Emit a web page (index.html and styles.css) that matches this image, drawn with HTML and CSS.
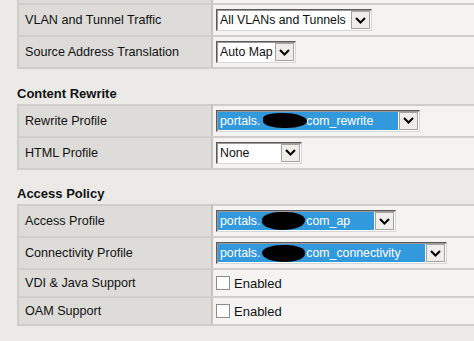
FILE: index.html
```html
<!DOCTYPE html>
<html>
<head>
<meta charset="utf-8">
<link rel="stylesheet" href="styles.css">
</head>
<body>
<div class="page">
  <table class="props first">
    <tr class="row"><td class="label"></td><td class="value"></td></tr>
    <tr class="row"><td class="label">VLAN and Tunnel Traffic</td>
      <td class="value"><div class="sel w-vlan"><span class="txt">All VLANs and Tunnels</span><span class="btn"><svg width="11" height="7" viewBox="0 0 11 7"><path d="M1 1 L5.5 5.5 L10 1" fill="none" stroke="#000" stroke-width="2"/></svg></span></div></td></tr>
    <tr class="row"><td class="label">Source Address Translation</td>
      <td class="value"><div class="sel w-auto"><span class="txt">Auto Map</span><span class="btn"><svg width="11" height="7" viewBox="0 0 11 7"><path d="M1 1 L5.5 5.5 L10 1" fill="none" stroke="#000" stroke-width="2"/></svg></span></div></td></tr>
  </table>

  <h3 class="section">Content Rewrite</h3>
  <table class="props">
    <tr class="row"><td class="label">Rewrite Profile</td>
      <td class="value"><div class="sel w-rewrite"><span class="txt hl">portals.<span class="redact r1"></span><span class="gap1"></span>com_rewrite</span><span class="btn"><svg width="11" height="7" viewBox="0 0 11 7"><path d="M1 1 L5.5 5.5 L10 1" fill="none" stroke="#000" stroke-width="2"/></svg></span></div></td></tr>
    <tr class="row"><td class="label">HTML Profile</td>
      <td class="value"><div class="sel w-none"><span class="txt">None</span><span class="btn"><svg width="11" height="7" viewBox="0 0 11 7"><path d="M1 1 L5.5 5.5 L10 1" fill="none" stroke="#000" stroke-width="2"/></svg></span></div></td></tr>
  </table>

  <h3 class="section">Access Policy</h3>
  <table class="props">
    <tr class="row"><td class="label">Access Profile</td>
      <td class="value"><div class="sel w-access"><span class="txt hl">portals.<span class="redact r2"></span><span class="gap1"></span>com_ap</span><span class="btn"><svg width="11" height="7" viewBox="0 0 11 7"><path d="M1 1 L5.5 5.5 L10 1" fill="none" stroke="#000" stroke-width="2"/></svg></span></div></td></tr>
    <tr class="row"><td class="label">Connectivity Profile</td>
      <td class="value"><div class="sel w-conn"><span class="txt hl">portals.<span class="redact r3"></span><span class="gap1"></span>com_connectivity</span><span class="btn"><svg width="11" height="7" viewBox="0 0 11 7"><path d="M1 1 L5.5 5.5 L10 1" fill="none" stroke="#000" stroke-width="2"/></svg></span></div></td></tr>
    <tr class="row short"><td class="label">VDI &amp; Java Support</td>
      <td class="value"><label class="chk"><span class="box"></span>Enabled</label></td></tr>
    <tr class="row short"><td class="label">OAM Support</td>
      <td class="value"><label class="chk"><span class="box"></span>Enabled</label></td></tr>
  </table>
</div>
</body>
</html>
```

FILE: styles.css
```css
html, body {
  margin: 0;
  padding: 0;
  background: #ebeae7;
  overflow: hidden;
}
body {
  font-family: "Liberation Sans", Arial, sans-serif;
  font-size: 12.6px;
  color: #111;
}
.page {
  padding-left: 17px;
}
.props {
  border-collapse: collapse;
  width: 480px;
  border-left: 2px solid #bdbcb9;
}
.props.first {
  margin-top: -29px;
}
.props td {
  border: 2px solid #cfcecb;
  padding: 0;
  vertical-align: middle;
}
.row {
  height: 32px;
}
.row.short {
  height: 28px;
}
.label {
  width: 186px;
  background: #dddcd9;
  padding-left: 6px !important;
  border-right: 2px solid #c4c3c0 !important;
}
.value {
  background: #f4f3f1;
  padding-left: 3px !important;
}
.section {
  margin: 0;
  padding: 17.5px 0 3px 0;
  font-size: 13px;
  line-height: 14px;
  font-weight: bold;
  color: #111;
}
.sel {
  display: flex;
  align-items: center;
  height: 18px;
  background: #fff;
  border-top: 1px solid #5a5a5a;
  border-left: 1px solid #5a5a5a;
  border-bottom: 1px solid #d6d6d6;
  border-right: 1px solid #d6d6d6;
  box-shadow: inset 1px 1px 0 #9a9a9a;
  padding: 1px;
  box-sizing: content-box;
}
.txt {
  flex: 1;
  height: 18px;
  line-height: 18px;
  padding-left: 2px;
  font-size: 12.3px;
  white-space: nowrap;
  position: relative;
  overflow: visible;
}
.txt.hl {
  background: #3399dd;
  color: #fff;
}
.btn {
  width: 17px;
  height: 16px;
  margin-left: 1px;
  background: #eeede9;
  border: 1px solid #a4a3a0;
  display: flex;
  align-items: center;
  justify-content: center;
}
.w-vlan { width: 152px; }
.w-auto { width: 76px; }
.w-rewrite { width: 200px; }
.w-none { width: 82px; }
.w-access { width: 176px; }
.w-conn { width: 227px; }
.redact {
  position: absolute;
  background: #000;
}
.gap1 {
  display: inline-block;
  width: 46px;
}
.r1 { left: 45px; top: 1px; width: 44px; height: 15px; border-radius: 40% 60% 50% 50%; }
.r2 { left: 44px; top: 0px; width: 43px; height: 18px; border-radius: 45% 45% 55% 50%; }
.r3 { left: 44px; top: 1px; width: 43px; height: 17px; border-radius: 50% 45% 50% 55%; }
.chk {
  display: flex;
  align-items: center;
  gap: 4px;
  font-size: 13px;
}
.box {
  width: 12px;
  height: 12px;
  background: #fff;
  border: 1px solid #8c8c8c;
}
```
